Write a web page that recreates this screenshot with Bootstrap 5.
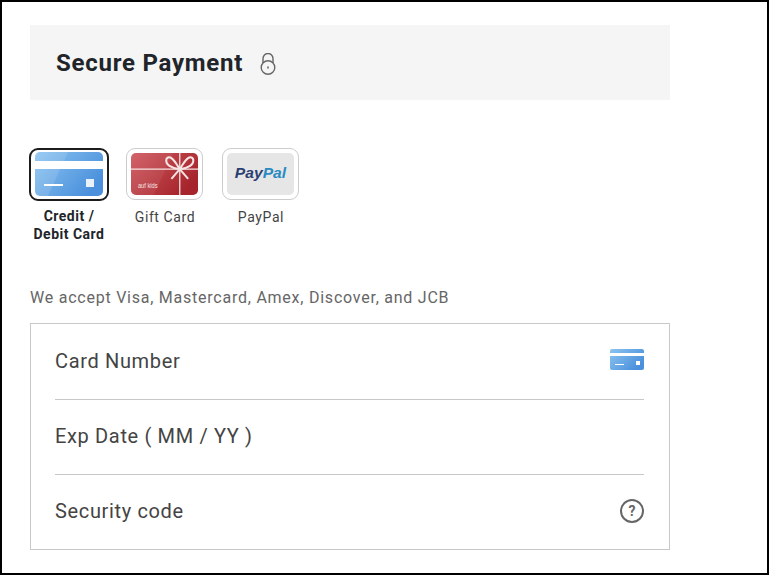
<!DOCTYPE html>
<html lang="en">
<head>
  <meta charset="UTF-8" />
  <meta name="viewport" content="width=device-width, initial-scale=1" />
  <title>Secure Payment</title>
  <link href="https://cdn.jsdelivr.net/npm/bootstrap@5.3.0/dist/css/bootstrap.min.css" rel="stylesheet" />
  <style>
    html, body { height: 100%; }
    body {
      font-family: Roboto, "Liberation Sans", Arial, sans-serif;
      color: #333;
      background: #fff;
    }
    .pay-frame {
      height: 575px;
      border: 2px solid #000;
      padding: 23px 28px 0;
      overflow: hidden;
    }
    .pay-column { width: 640px; }
    .pay-header {
      height: 75px;
      padding-left: 26px;
      background: #f5f5f5;
      gap: 17px;
      margin-bottom: 48px;
    }
    .pay-title {
      font-size: 24px;
      font-weight: 700;
      letter-spacing: 0.75px;
      color: #212529;
      margin: 0;
      padding-top: 2px;
    }
    .lock-icon { margin-top: 2px; }
    .method-list { margin-bottom: 45px; }
    .method-item {
      width: 78px;
      margin-right: 18px;
      font-size: 14px;
      line-height: 18px;
      letter-spacing: 0.6px;
      text-align: center;
      color: #444;
    }
    .method-item.active { color: #212529; font-weight: 700; letter-spacing: 0.5px; }
    .method-label { margin-top: 8px; white-space: nowrap; }
    .method-item.active .method-label { margin-top: 6px; }
    .method-tile {
      width: 77px;
      height: 52px;
      padding: 4px;
      border: 1px solid #ccc;
      border-radius: 9px;
      background: #fff;
    }
    .method-tile svg { display: block; width: 100%; height: 100%; letter-spacing: 0; }
    .method-item.active .method-tile {
      width: 80px;
      height: 53px;
      border: 2px solid #1c1c1c;
      border-radius: 9px;
      padding: 2px 4px 3px;
      margin-left: -1px;
    }
    .accept-note {
      font-size: 16px;
      letter-spacing: 0.76px;
      line-height: 20px;
      color: #666;
      margin-bottom: 15px;
    }
    .card-box {
      border: 1px solid #c8c8c8;
      padding: 0 25px 0 24px;
    }
    .field-row {
      height: 75px;
      padding-bottom: 2px;
      border-bottom: 1px solid #c8c8c8;
      font-size: 20px;
      letter-spacing: 0.65px;
      color: #444;
    }
    .field-row:first-child { height: 76px; }
    .field-row:last-child { height: 74px; border-bottom: 0; }
    .field-card { margin-top: -3px; }
    .help-ring {
      width: 24px;
      height: 24px;
      border: 2px solid #666;
      border-radius: 50%;
      font-size: 14px;
      font-weight: 700;
      letter-spacing: 0;
      color: #666;
    }
  </style>
</head>
<body>

  <div class="pay-frame">
    <div class="pay-column">

      <div class="pay-header d-flex align-items-center">
        <h1 class="pay-title">Secure Payment</h1>
        <svg class="lock-icon" width="16" height="22" viewBox="0 0 16 22" fill="none" stroke="#666" stroke-width="1.4">
          <path d="M3 10V5.500a5 5 0 0 1 10 0V10" />
          <circle cx="8" cy="14.500" r="6.800" fill="#f5f5f5" />
          <path d="M8 13.600v2" stroke-width="1.600" />
        </svg>
      </div>

      <div class="method-list d-flex">
        <div class="method-item active">
          <div class="method-tile">
            <svg viewBox="0 0 68 44" preserveAspectRatio="none">
              <defs>
                <linearGradient id="blueCard" x1="0" y1="0" x2="1" y2="0.6">
                  <stop offset="0" stop-color="#8cc4f0" />
                  <stop offset="1" stop-color="#4a90dc" />
                </linearGradient>
              </defs>
              <rect width="68" height="44" rx="5" fill="url(#blueCard)" />
              <path d="M5 0h28L13 44H5a5 5 0 0 1-5-5V5a5 5 0 0 1 5-5z" fill="#fff" fill-opacity="0.12" />
              <rect y="9" width="68" height="8" fill="#fff" />
              <rect x="9" y="32" width="19" height="2" fill="#fff" />
              <rect x="51" y="27" width="8" height="8" fill="#e8f2fb" />
            </svg>
          </div>
          <div class="method-label">Credit /<br />Debit Card</div>
        </div>

        <div class="method-item">
          <div class="method-tile">
            <svg viewBox="0 0 68 44" preserveAspectRatio="none">
              <defs>
                <linearGradient id="redCard" x1="0" y1="0" x2="1" y2="0.6">
                  <stop offset="0" stop-color="#cf5a60" />
                  <stop offset="1" stop-color="#a6242b" />
                </linearGradient>
              </defs>
              <rect width="68" height="44" rx="5" fill="url(#redCard)" />
              <path d="M5 0h38L23 44H5a5 5 0 0 1-5-5V5a5 5 0 0 1 5-5z" fill="#fff" fill-opacity="0.06" />
              <g stroke="#f6e4e4" fill="none">
                <path d="M0 17h68M49.500 0v44" stroke-width="1.300" />
                <path d="M49.500 17C46 11 42 4 38.500 4.500C34.500 5 35 11 39 13.500C42 15.500 46 16.500 49.500 17C53 16.500 57 15.500 60 13.500C64 11 64.500 5 60.500 4.500C57 4 53 11 49.500 17z" stroke-width="2" />
                <path d="M49.500 17L41 27M49.500 17L58 27" stroke-width="2" />
              </g>
              <text x="7" y="37" font-family="Liberation Sans, sans-serif" font-size="8" fill="#f6e4e4" textLength="20" lengthAdjust="spacingAndGlyphs">auf kids</text>
            </svg>
          </div>
          <div class="method-label">Gift Card</div>
        </div>

        <div class="method-item">
          <div class="method-tile">
            <svg viewBox="0 0 68 44" preserveAspectRatio="none">
              <rect width="68" height="44" rx="5" fill="#e6e6e6" />
              <text x="8" y="26.500" font-family="Liberation Sans, sans-serif" font-size="16" font-weight="700" font-style="italic" textLength="52" lengthAdjust="spacingAndGlyphs"><tspan fill="#2b3f73">Pay</tspan><tspan fill="#2a8ac2">Pal</tspan></text>
            </svg>
          </div>
          <div class="method-label">PayPal</div>
        </div>
      </div>

      <div class="accept-note">We accept Visa, Mastercard, Amex, Discover, and JCB</div>

      <div class="card-box">
        <div class="field-row d-flex align-items-center justify-content-between">
          <span>Card Number</span>
          <svg class="field-card" width="34" height="21" viewBox="0 0 34 21">
            <defs>
              <linearGradient id="blueSmall" x1="0" y1="0" x2="1" y2="0.6">
                <stop offset="0" stop-color="#8cc4f0" />
                <stop offset="1" stop-color="#4a90dc" />
              </linearGradient>
            </defs>
            <rect width="34" height="21" rx="2" fill="url(#blueSmall)" />
            <rect y="4" width="34" height="3" fill="#fff" />
            <rect x="5" y="15" width="9" height="1" fill="#fff" />
            <rect x="26" y="12" width="4" height="4" fill="#fff" />
          </svg>
        </div>
        <div class="field-row d-flex align-items-center">
          <span>Exp Date ( MM / YY )</span>
        </div>
        <div class="field-row d-flex align-items-center justify-content-between">
          <span>Security code</span>
          <span class="help-ring d-flex align-items-center justify-content-center">?</span>
        </div>
      </div>

    </div>
  </div>

<script src="https://cdn.jsdelivr.net/npm/bootstrap@5.3.0/dist/js/bootstrap.bundle.min.js"></script>
</body>
</html>
